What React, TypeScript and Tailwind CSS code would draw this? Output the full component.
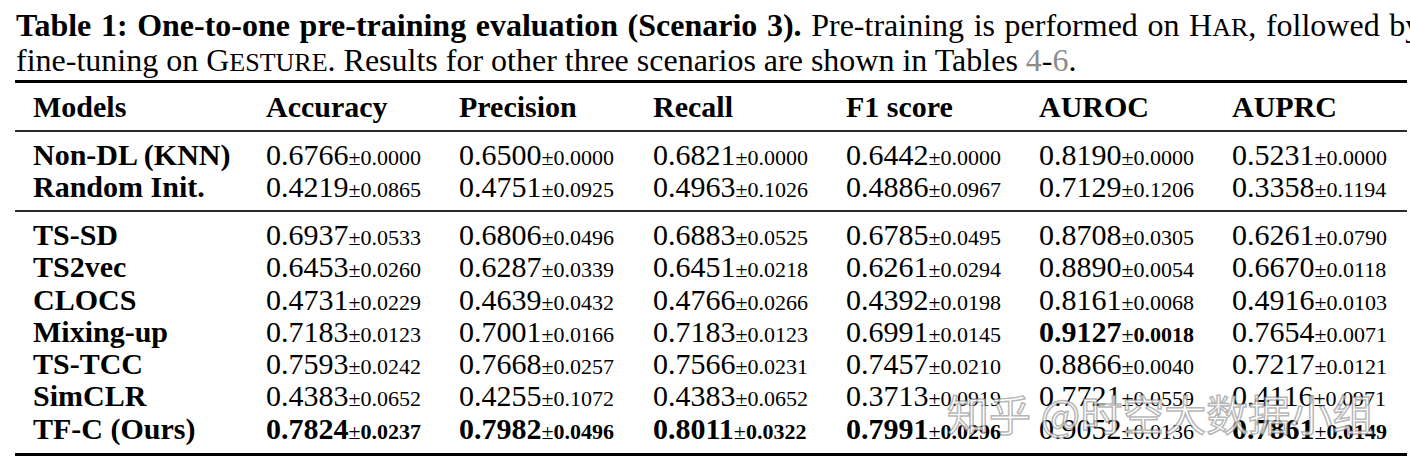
import React from "react";

type Cell = [string, string, boolean?];
type Row = [string, Cell[]];

const group1: Row[] = [
  ["Non-DL (KNN)", [["0.6766", "0.0000"], ["0.6500", "0.0000"], ["0.6821", "0.0000"], ["0.6442", "0.0000"], ["0.8190", "0.0000"], ["0.5231", "0.0000"]]],
  ["Random Init.", [["0.4219", "0.0865"], ["0.4751", "0.0925"], ["0.4963", "0.1026"], ["0.4886", "0.0967"], ["0.7129", "0.1206"], ["0.3358", "0.1194"]]],
];

const group2: Row[] = [
  ["TS-SD", [["0.6937", "0.0533"], ["0.6806", "0.0496"], ["0.6883", "0.0525"], ["0.6785", "0.0495"], ["0.8708", "0.0305"], ["0.6261", "0.0790"]]],
  ["TS2vec", [["0.6453", "0.0260"], ["0.6287", "0.0339"], ["0.6451", "0.0218"], ["0.6261", "0.0294"], ["0.8890", "0.0054"], ["0.6670", "0.0118"]]],
  ["CLOCS", [["0.4731", "0.0229"], ["0.4639", "0.0432"], ["0.4766", "0.0266"], ["0.4392", "0.0198"], ["0.8161", "0.0068"], ["0.4916", "0.0103"]]],
  ["Mixing-up", [["0.7183", "0.0123"], ["0.7001", "0.0166"], ["0.7183", "0.0123"], ["0.6991", "0.0145"], ["0.9127", "0.0018", true], ["0.7654", "0.0071"]]],
  ["TS-TCC", [["0.7593", "0.0242"], ["0.7668", "0.0257"], ["0.7566", "0.0231"], ["0.7457", "0.0210"], ["0.8866", "0.0040"], ["0.7217", "0.0121"]]],
  ["SimCLR", [["0.4383", "0.0652"], ["0.4255", "0.1072"], ["0.4383", "0.0652"], ["0.3713", "0.0919"], ["0.7721", "0.0559"], ["0.4116", "0.0971"]]],
  ["TF-C (Ours)", [["0.7824", "0.0237", true], ["0.7982", "0.0496", true], ["0.8011", "0.0322", true], ["0.7991", "0.0296", true], ["0.9052", "0.0136"], ["0.7861", "0.0149", true]]],
];

const headers = ["Accuracy", "Precision", "Recall", "F1 score", "AUROC", "AUPRC"];

const gridCols = "grid grid-cols-[251px_193px_194px_193px_193px_193px_1fr]";

function Val({ c, lh }: { c: Cell; lh: string }) {
  const [m, s, b] = c;
  return (
    <div className={`whitespace-nowrap text-[30px] ${lh} ${b ? "font-bold" : ""}`}>
      {m}
      <span className="text-[22px] leading-[18px]">
        <span className="font-normal">±</span>
        {s}
      </span>
    </div>
  );
}

function DataRow({ r, lh }: { r: Row; lh: string }) {
  return (
    <div className={`${gridCols} ${lh} text-[30px]`}>
      <div className={`pl-[18px] font-bold whitespace-nowrap ${lh}`}>{r[0]}</div>
      {r[1].map((c, i) => (
        <Val key={i} c={c} lh={lh} />
      ))}
    </div>
  );
}

export default function App() {
  return (
    <div className="relative w-[1410px] h-[466px] bg-white overflow-hidden text-black font-['Liberation_Serif','Times_New_Roman',serif]">
      <div className="pt-[8px] pl-[16px] text-[32px] leading-[35px] whitespace-nowrap">
        <div className="[word-spacing:1.6px]">
          <span className="font-bold">Table 1: One-to-one pre-training evaluation (Scenario 3).</span>{" "}
          Pre-training is performed on H<span className="text-[26px] leading-[20px]">AR</span>, followed by
        </div>
        <div>
          fine-tuning on G<span className="text-[26px] leading-[20px]">ESTURE</span>. Results for other three scenarios are shown in Tables{" "}
          <span className="text-[#8c8c8c]">4</span>-<span className="text-[#8c8c8c]">6</span>.
        </div>
      </div>

      <div className="mt-[2px] ml-[15px] w-[1392px]">
        <div className="h-[3px] bg-black" />
        <div className={`${gridCols} pt-[8px] pb-[7px] leading-[32px] text-[30px] font-bold`}>
          <div className="pl-[18px]">Models</div>
          {headers.map((h) => (
            <div key={h}>{h}</div>
          ))}
        </div>
        <div className="h-[2px] bg-[#2a2a2a]" />
        <div className="pt-[7px] pb-[7px]">
          {group1.map((r) => (
            <DataRow key={r[0]} r={r} lh="leading-[32px]" />
          ))}
        </div>
        <div className="h-[2px] bg-[#2a2a2a]" />
        <div className="pt-[7px] pb-[8px]">
          {group2.map((r) => (
            <DataRow key={r[0]} r={r} lh="leading-[32.3px]" />
          ))}
        </div>
        <div className="h-[3px] bg-black" />
      </div>

      <div className="absolute left-[947px] top-[389px] text-[42px] leading-[48px] whitespace-nowrap text-white/75 font-['Noto_Sans_CJK_SC',sans-serif] [-webkit-text-stroke:1.5px_rgba(110,110,110,0.5)]">
        知乎 @时空大数据小组
      </div>
    </div>
  );
}
